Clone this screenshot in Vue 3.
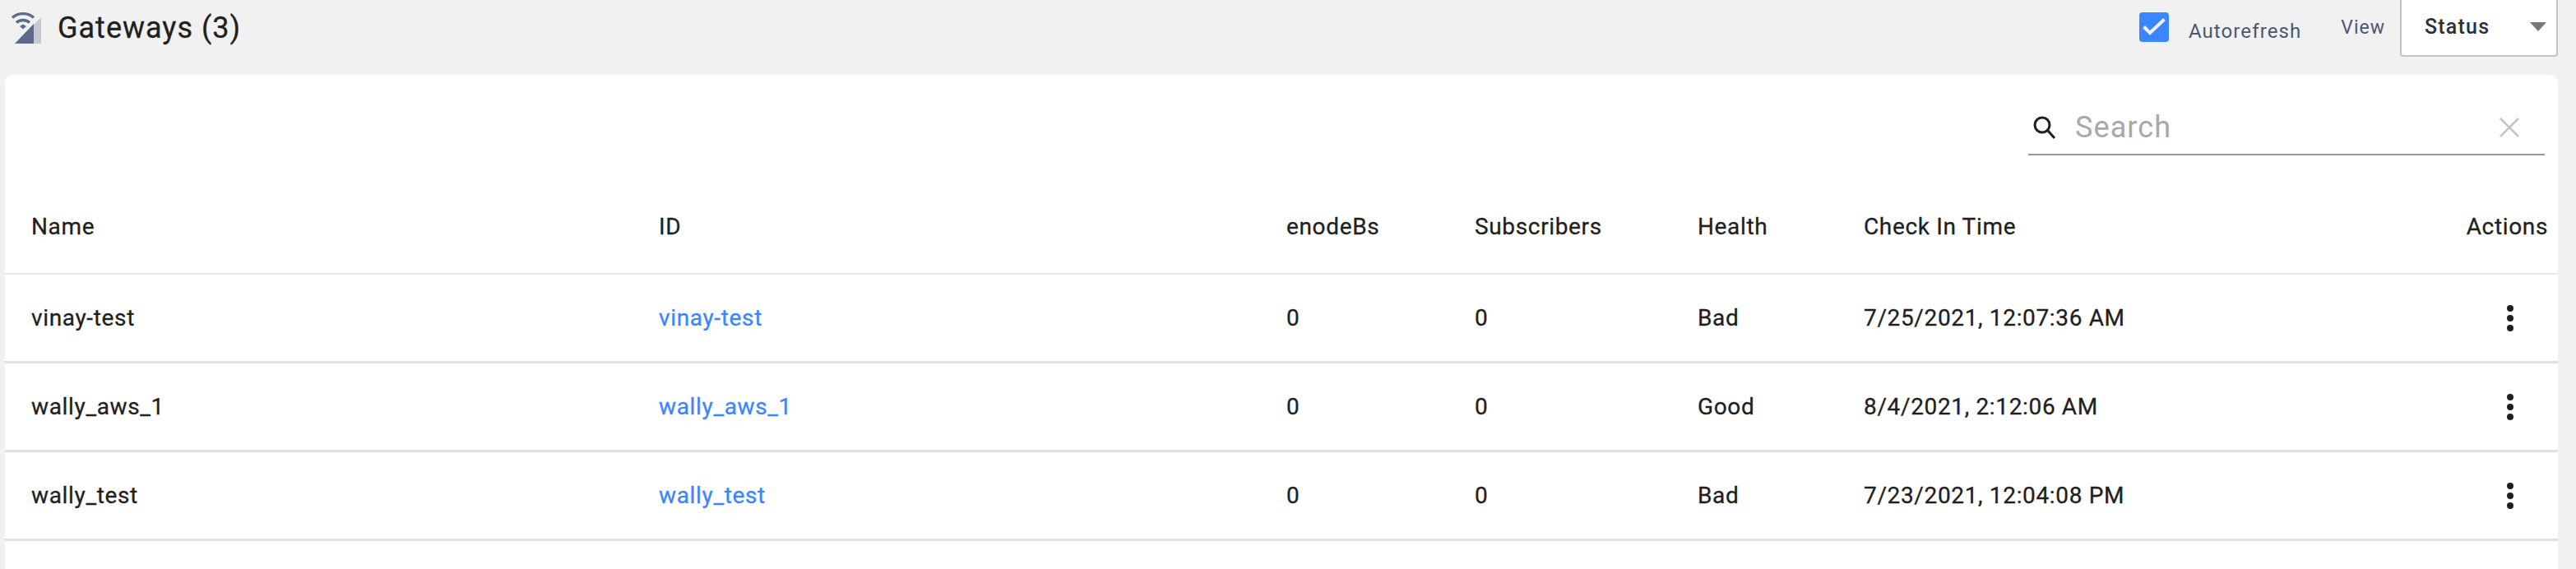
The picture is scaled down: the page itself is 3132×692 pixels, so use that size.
<script setup>
const columns = ['Name', 'ID', 'enodeBs', 'Subscribers', 'Health', 'Check In Time']
const rows = [
  { name: 'vinay-test', enodebs: 0, subs: 0, health: 'Bad', time: '7/25/2021, 12:07:36 AM' },
  { name: 'wally_aws_1', enodebs: 0, subs: 0, health: 'Good', time: '8/4/2021, 2:12:06 AM' },
  { name: 'wally_test', enodebs: 0, subs: 0, health: 'Bad', time: '7/23/2021, 12:04:08 PM' },
]
</script>

<template>
  <div class="page">
    <header class="topbar">
      <div class="title-group">
        <svg class="logo" width="36" height="40" viewBox="0 0 36 40">
          <path d="M36 7V39H4z" fill="#c5c9d3" />
          <path d="M27 15V39H4z" fill="#5c6b8c" />
          <path d="M1 7.500C8 1 20 1 27 7.500" fill="none" stroke="#5c6b8c" stroke-width="3.400" />
          <path d="M6 13.500C10 9.500 18 9.500 22 13.500" fill="none" stroke="#5c6b8c" stroke-width="3.400" />
          <path d="M10 18L14 15.500L18 18L14 21.500z" fill="#5c6b8c" />
        </svg>
        <h1 class="title">Gateways (3)</h1>
      </div>
      <div class="controls">
        <span class="checkbox">
          <svg width="36" height="36" viewBox="0 0 36 36">
            <path d="M5.500 17.500L13 25L30.500 8.500" fill="none" stroke="#eef3ff" stroke-width="4" />
          </svg>
        </span>
        <span class="auto-label">Autorefresh</span>
        <span class="view-label">View</span>
        <div class="select">
          <span>Status</span>
          <i class="caret"></i>
        </div>
      </div>
    </header>

    <main class="card">
      <div class="toolbar">
        <div class="search">
          <svg class="search-icon" width="32" height="32" viewBox="0 0 32 32">
            <circle cx="13" cy="13" r="9" fill="none" stroke="#1f1f1f" stroke-width="3" />
            <path d="M20 20L28 29" stroke="#1f1f1f" stroke-width="3" />
          </svg>
          <span class="placeholder">Search</span>
          <svg class="clear-icon" width="26" height="26" viewBox="0 0 26 26">
            <path d="M2 2L24 24M24 2L2 24" stroke="#c4c4c4" stroke-width="2.600" />
          </svg>
        </div>
      </div>

      <div class="row head">
        <div v-for="column in columns" :key="column" class="cell">{{ column }}</div>
        <div class="cell actions">Actions</div>
      </div>
      <div v-for="row in rows" :key="row.name" class="row body">
        <div class="cell">{{ row.name }}</div>
        <div class="cell link">{{ row.name }}</div>
        <div class="cell">{{ row.enodebs }}</div>
        <div class="cell">{{ row.subs }}</div>
        <div class="cell">{{ row.health }}</div>
        <div class="cell">{{ row.time }}</div>
        <div class="cell dots"><i></i><i></i><i></i></div>
      </div>
    </main>
  </div>
</template>

<style>
html, body { margin: 0; background: #f1f1f1; overflow: hidden; }
</style>

<style scoped>
.page {
  width: 3132px;
  height: 692px;
  background: #f1f1f1;
  font-family: Roboto, "Liberation Sans", sans-serif;
  color: #1f1f1f;
  overflow: hidden;
}
.topbar {
  height: 91px;
  box-sizing: border-box;
  padding: 0 22px 0 14px;
  display: flex;
  justify-content: space-between;
  align-items: flex-start;
}
.title-group { display: flex; align-items: center; gap: 20px; padding-top: 13px; }
.title { margin: 0; font-size: 36px; line-height: 42px; font-weight: 400; letter-spacing: 1px; -webkit-text-stroke: 0.3px #1f1f1f; }
.logo { display: block; }
.controls { display: flex; align-items: flex-start; }
.checkbox {
  width: 36px; height: 36px; margin-top: 15px; border-radius: 4px;
  background: #3b86ff; display: flex; align-items: center; justify-content: center;
}
.checkbox svg { display: block; }
.auto-label { margin: 25px 0 0 24px; font-size: 24px; line-height: 26px; letter-spacing: 1.1px; color: #4c5674; }
.view-label { margin: 21px 0 0 48px; font-size: 23px; line-height: 26px; letter-spacing: 1px; color: #4c5674; }
.select {
  width: 192px; height: 69px; box-sizing: border-box; margin-left: 18px;
  background: #fff; border: 2px solid #c4c4c4; border-top: 0;
  border-radius: 0 0 4px 4px;
  display: flex; align-items: center; justify-content: space-between;
  padding: 0 12px 2px 28px;
  font-size: 25px; font-weight: 500; letter-spacing: 1.2px; color: #2b2f3b;
}
.caret { width: 0; height: 0; border: 10px solid transparent; border-top: 11px solid #777; border-bottom: 0; }
.card { width: 3104px; margin-left: 6px; height: 640px; background: #fff; border-radius: 10px 10px 0 0; }
.toolbar { height: 119px; box-sizing: border-box; padding: 38px 16px 0 0; display: flex; justify-content: flex-end; }
.search {
  width: 628px; height: 60px; box-sizing: border-box;
  border-bottom: 2px solid #959595; display: flex; align-items: center;
  padding: 0 30px 6px 4px;
}
.search-icon { flex: none; }
.placeholder { margin-left: 21px; flex: 1; font-size: 36px; letter-spacing: 1.1px; color: #a8a8a8; }
.row {
  display: grid;
  grid-template-columns: 763px 763px 229px 271px 202px 1fr 160px;
  padding: 0 12px 0 32px;
  align-items: center;
  font-size: 28px;
  letter-spacing: 0.65px;
  -webkit-text-stroke: 0.3px currentColor;
}
.head { height: 124px; padding-top: 8px; border-bottom: 2px solid #e8e8e8; box-sizing: border-box; }
.body { height: 108px; box-sizing: border-box; border-bottom: 3px solid #e0e0e0; }
.actions { text-align: right; }
.link { color: #3b86ff; }
.dots { display: flex; flex-direction: column; align-items: flex-end; gap: 4px; padding-right: 42px; }
.dots i { width: 8px; height: 8px; border-radius: 50%; background: #1f1f1f; }
</style>
